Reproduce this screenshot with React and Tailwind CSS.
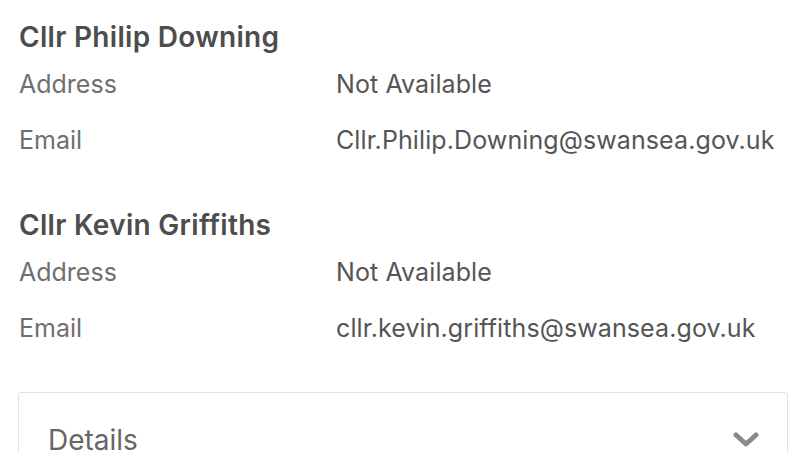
import React from "react";

const councillors = [
  {
    name: "Cllr Philip Downing",
    address: "Not Available",
    email: "Cllr.Philip.Downing@swansea.gov.uk",
  },
  {
    name: "Cllr Kevin Griffiths",
    address: "Not Available",
    email: "cllr.kevin.griffiths@swansea.gov.uk",
  },
];

const Row = ({ label, value }) => (
  <div className="flex h-[56px] items-center">
    <div className="w-[317px] text-[25px] text-[#6f6f6f]">{label}</div>
    <div className="text-[25px] tracking-[0.1px] text-[#555555]">{value}</div>
  </div>
);

export default function App() {
  return (
    <div
      className="h-[453px] w-[806px] overflow-hidden bg-white px-[19px] pt-[19px]"
      style={{ fontFamily: "Inter, 'Noto Sans', sans-serif" }}
    >
      {councillors.map((c) => (
        <div key={c.name} className="mb-[38px]">
          <h2 className="mb-[2px] text-[28px] font-semibold leading-[36px] tracking-[0.3px] text-[#4d4d4d]">
            {c.name}
          </h2>
          <Row label="Address" value={c.address} />
          <Row label="Email" value={c.email} />
        </div>
      ))}

      {/* collapsed details panel */}
      <div className="-ml-px mt-[-3px] h-[120px] w-[770px] rounded-t-[3px] border border-[#e2e2e2] px-[29px] pt-[29px]">
        <div className="flex h-[36px] items-center justify-between">
          <span className="text-[28px] leading-[36px] text-[#666666]">Details</span>
          <svg
            width="26"
            height="18"
            viewBox="0 0 26 18"
            className="mr-[-1px]"
          >
            <path
              d="M3 4 L13 13 L23 4"
              fill="none"
              stroke="#8a8a8a"
              strokeWidth="5"
              strokeLinecap="round"
              strokeLinejoin="round"
            />
          </svg>
        </div>
      </div>
    </div>
  );
}
